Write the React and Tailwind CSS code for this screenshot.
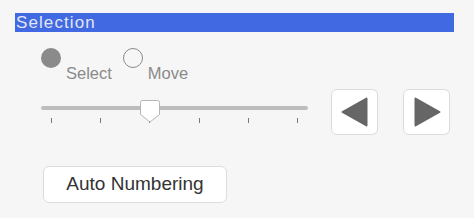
import React, { useState } from "react";

const ticks = [0, 1, 2, 3, 4, 5];

const Radio = ({ checked, label, onClick }) => (
  <button type="button" onClick={onClick} className="flex items-start">
    <span
      className={`block w-[20px] h-[20px] rounded-full ${
        checked ? "bg-[#8a8a8a]" : "border-[1.5px] border-[#8a8a8a] bg-transparent"
      }`}
    />
    <span className="ml-[5px] mt-[16px] text-[16.5px] leading-[18px] text-[#8a8a8a]">{label}</span>
  </button>
);

const ArrowButton = ({ dir }) => (
  <button
    type="button"
    className="w-[47px] h-[46px] rounded-[6px] bg-white border border-[#dcdcdc] flex items-center justify-center"
  >
    <svg width="28" height="30" viewBox="0 0 28 30">
      {dir === "left" ? (
        <path d="M1.5 15 L25.5 1.5 V28.5 Z" fill="#666" stroke="#666" strokeWidth="2" strokeLinejoin="round" />
      ) : (
        <path d="M26.5 15 L2.5 1.5 V28.5 Z" fill="#666" stroke="#666" strokeWidth="2" strokeLinejoin="round" />
      )}
    </svg>
  </button>
);

export default function App() {
  const [mode, setMode] = useState("select");

  return (
    <div
      className="w-[474px] h-[218px] bg-[#f6f6f6] pt-[13px] pl-[15px] pr-[20px]"
      style={{ fontFamily: '"Liberation Sans", Arial, sans-serif' }}
    >
      <div className="h-[19px] bg-[#4169e1] text-[17px] leading-[19px] tracking-[1.1px] text-[#e2e6f2] pl-[1px]">
        Selection
      </div>

      <div className="mt-[16px] pl-[26px] flex gap-[11px]">
        <Radio checked={mode === "select"} label="Select" onClick={() => setMode("select")} />
        <Radio checked={mode === "move"} label="Move" onClick={() => setMode("move")} />
      </div>

      <div className="mt-[7px] pl-[26px] flex items-start">
        <div className="w-[267px] pt-[17px]">
          <div className="relative h-[4px] rounded-full bg-[#bdbdbd]">
            <svg
              className="absolute left-[99px] top-[-6px]"
              width="20"
              height="23"
              viewBox="0 0 20 23"
            >
              <path
                d="M0.5 2.5 Q0.5 0.5 2.5 0.5 H17.5 Q19.5 0.5 19.5 2.5 V14.5 L10 22 L0.5 14.5 Z"
                fill="#fff"
                stroke="#b5b5b5"
                strokeWidth="1"
              />
            </svg>
          </div>
          <div className="mt-[8px] px-[10px] flex justify-between">
            {ticks.map((t) => (
              <span key={t} className="block w-[1px] h-[5px] bg-[#777]" />
            ))}
          </div>
        </div>
        <div className="ml-[23px] flex gap-[25px]">
          <ArrowButton dir="left" />
          <ArrowButton dir="right" />
        </div>
      </div>

      <div className="mt-[31px] pl-[28px]">
        <button
          type="button"
          className="w-[184px] h-[37px] rounded-[6px] bg-white border border-[#dcdcdc] text-[19px] text-[#333]"
        >
          Auto Numbering
        </button>
      </div>
    </div>
  );
}
